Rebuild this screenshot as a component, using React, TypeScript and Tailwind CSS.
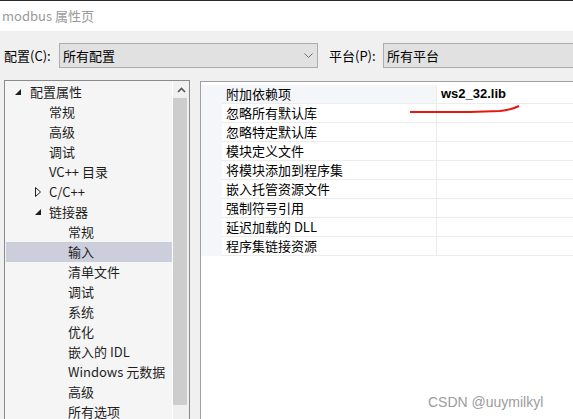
import React from "react";

type TreeItem = { label: string; level: 0 | 1 | 2; arrow?: "open" | "closed"; selected?: boolean };

const tree: TreeItem[] = [
  { label: "配置属性", level: 0, arrow: "open" },
  { label: "常规", level: 1 },
  { label: "高级", level: 1 },
  { label: "调试", level: 1 },
  { label: "VC++ 目录", level: 1 },
  { label: "C/C++", level: 1, arrow: "closed" },
  { label: "链接器", level: 1, arrow: "open" },
  { label: "常规", level: 2 },
  { label: "输入", level: 2, selected: true },
  { label: "清单文件", level: 2 },
  { label: "调试", level: 2 },
  { label: "系统", level: 2 },
  { label: "优化", level: 2 },
  { label: "嵌入的 IDL", level: 2 },
  { label: "Windows 元数据", level: 2 },
  { label: "高级", level: 2 },
  { label: "所有选项", level: 2 },
];

const props = [
  { name: "附加依赖项", value: "ws2_32.lib" },
  { name: "忽略所有默认库" },
  { name: "忽略特定默认库" },
  { name: "模块定义文件" },
  { name: "将模块添加到程序集" },
  { name: "嵌入托管资源文件" },
  { name: "强制符号引用" },
  { name: "延迟加载的 DLL" },
  { name: "程序集链接资源" },
];

const indent = ["w-[24px] pl-[9px]", "w-[43px] pl-[29px]", "w-[62px] pl-[48px]"];

function Arrow({ kind }: { kind?: "open" | "closed" }) {
  if (kind === "open")
    return (
      <svg width="7" height="7" viewBox="0 0 7 7">
        <polygon points="6,0 6,6 0,6" fill="#1e1e1e" />
      </svg>
    );
  if (kind === "closed")
    return (
      <svg width="7" height="10" viewBox="0 0 7 10">
        <polygon points="0.5,0.5 5.5,5 0.5,9.5" fill="none" stroke="#1e1e1e" />
      </svg>
    );
  return null;
}

export default function App() {
  return (
    <div className="w-[573px] h-[419px] overflow-hidden relative bg-[#f0f0f0] text-black text-[13px] font-['Noto_Sans_CJK_SC',sans-serif]">
      <div className="h-px bg-[#2b2b2b]" />
      <div className="h-[30px] bg-white flex items-center pl-[2px] text-[13px] text-[#9a9a9a]">modbus 属性页</div>

      {/* configuration / platform selectors */}
      <div className="h-[49px] flex items-start pt-[12px]">
        <span className="w-[59px] pl-[4px] h-[25px] leading-[25px]">配置(C):</span>
        <div className="w-[259px] h-[25px] bg-[#e1e1e1] border border-[#adadad] flex items-center pl-[3px] pr-[4px]">
          <span className="flex-1">所有配置</span>
          <svg width="9" height="6" viewBox="0 0 9 6">
            <polyline points="0.5,0.5 4.5,4.5 8.5,0.5" fill="none" stroke="#6d6d6d" />
          </svg>
        </div>
        <span className="ml-[11px] w-[54px] h-[25px] leading-[25px]">平台(P):</span>
        <div className="flex-1 h-[25px] bg-[#e1e1e1] border border-[#adadad] border-r-0 flex items-center pl-[3px]">所有平台</div>
      </div>

      <div className="flex items-start">
        {/* tree */}
        <div className="ml-[4px] w-[186px] h-[345px] border border-[#8a8a8a] border-b-0 flex">
          <div className="flex-1 bg-[#f5f5f5] pl-[1px] pt-px">
            {tree.map((t, i) => (
              <div key={i} className={`h-[20px] flex items-center leading-[20px] ${t.selected ? "bg-[#cccedb]" : ""}`}>
                <span className={`${indent[t.level]} flex items-center shrink-0`}>
                  <Arrow kind={t.arrow} />
                </span>
                <span className="text-[#1e1e1e]">{t.label}</span>
              </div>
            ))}
          </div>
          <div className="w-[17px] border-l border-white bg-[#f0f0f0] flex flex-col">
            <div className="h-[17px] flex items-center justify-center">
              <svg width="9" height="6" viewBox="0 0 9 6">
                <polyline points="1,5 4.5,1.5 8,5" fill="none" stroke="#555" strokeWidth="1.6" />
              </svg>
            </div>
            <div className="h-[307px] mr-[2px] bg-[#cdcdcd]" />
          </div>
        </div>

        {/* property grid */}
        <div className="ml-[10px] mt-px flex-1 h-[345px] bg-white border-l border-t border-[#a0a0a0] pt-[3px]">
          {props.map((p, i) => (
            <div key={i} className="h-[19px] flex leading-[18px]">
              <div className="w-[21px] bg-[#f4f6fa]" />
              <div className={`w-[214px] pl-[4px] border-b border-[#ececec] ${i === 0 ? "bg-[#f4f6fa]" : ""}`}>{p.name}</div>
              <div className="flex-1 pl-[4px] border-b border-l border-[#ececec] font-bold font-['Liberation_Sans',sans-serif] text-[13px]">
                {p.value}
              </div>
            </div>
          ))}
        </div>
      </div>

      {/* hand-drawn underline */}
      <svg className="absolute left-0 top-0 pointer-events-none" width="573" height="419">
        <path d="M410 112 L470 112 L500 111 Q511 110 519 106" fill="none" stroke="#e8170d" strokeWidth="2" />
      </svg>

      <div className="absolute left-[428px] top-[392px] text-[14px] text-[#9c9c9c] font-['Liberation_Sans',sans-serif]">CSDN @uuymilkyl</div>
    </div>
  );
}
